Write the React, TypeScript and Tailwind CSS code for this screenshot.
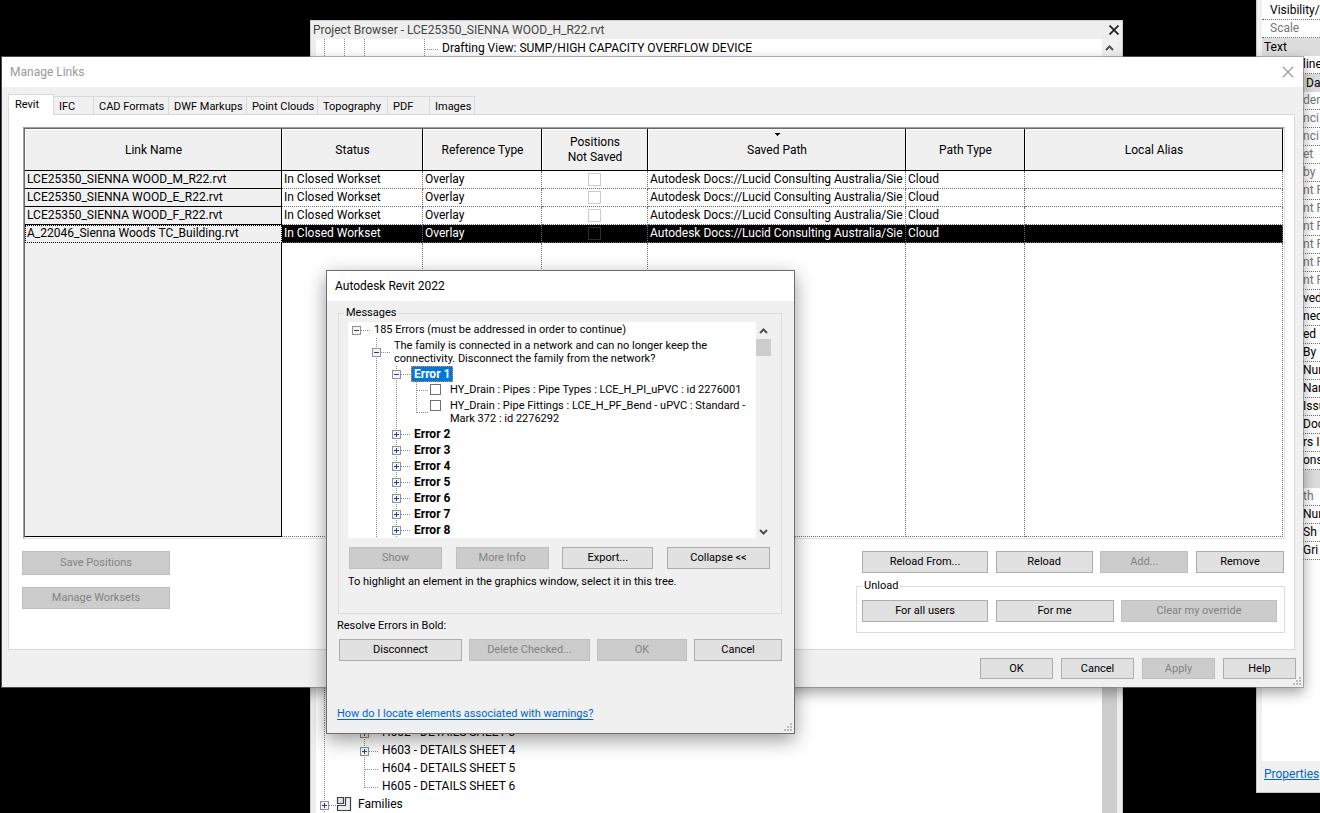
import type { ReactNode } from 'react';

type GuideKind = 'none' | 'line' | 'tee' | 'elbow' | 'plus' | 'minus' | 'root';

const DOT = '#8c8c8c';

function Guide({ kind, height, cy, last = false }: { kind: GuideKind; height: number; cy: number; last?: boolean }) {
  const width = last ? 26 : 20;
  const boxed = kind === 'plus' || kind === 'minus' || kind === 'root';
  const vertical = kind !== 'none' && kind !== 'root';
  const horizontal = boxed || kind === 'tee' || kind === 'elbow';
  const bottom = kind === 'elbow' ? cy + 1 : height;
  return (
    <svg width={width} height={height} className="block shrink-0" shapeRendering="crispEdges" aria-hidden="true">
      {vertical && <path d={`M8.5 0V${bottom}`} stroke={DOT} strokeDasharray="1 1" />}
      {horizontal && <path d={`M9 ${cy + 0.5}H23`} stroke={DOT} strokeDasharray="1 1" />}
      {boxed && (
        <>
          <rect x="4.5" y={cy - 3.5} width="8" height="8" fill="#f4f4f4" stroke="#919191" />
          <path d={`M6 ${cy + 0.5}H11`} stroke="#26439b" />
          {kind === 'plus' && <path d={`M8.5 ${cy - 2}V${cy + 3}`} stroke="#26439b" />}
        </>
      )}
    </svg>
  );
}

function TreeRow({
  guides,
  height,
  cy,
  children,
}: {
  guides: GuideKind[];
  height: number;
  cy: number;
  children: ReactNode;
}) {
  return (
    <li className="flex shrink-0 items-center whitespace-nowrap">
      {guides.map((g, i) => (
        <Guide key={i} kind={g} height={height} cy={cy} last={i === guides.length - 1} />
      ))}
      {children}
    </li>
  );
}

function Button({ children, className, disabled }: { children: ReactNode; className: string; disabled?: boolean }) {
  return (
    <button
      type="button"
      disabled={disabled}
      className={`shrink-0 border border-[#adadad] bg-[#e1e1e1] text-center text-[11px] leading-4 whitespace-nowrap text-black disabled:border-[#bfbfbf] disabled:bg-[#cccccc] disabled:text-[#838383] ${className}`}
    >
      {children}
    </button>
  );
}

function Chevron({ down }: { down?: boolean }) {
  return (
    <svg width="9" height="6" viewBox="0 0 9 6" aria-hidden="true">
      <path d={down ? 'M1 1l3.5 3.5L8 1' : 'M1 5l3.5-3.5L8 5'} fill="none" stroke="#505050" strokeWidth="2" />
    </svg>
  );
}

function Grip() {
  const dots = [
    [6, 0],
    [3, 3],
    [6, 3],
    [0, 6],
    [3, 6],
    [6, 6],
  ];
  return (
    <svg width="8" height="8" className="absolute right-[2px] bottom-[2px]" aria-hidden="true">
      {dots.map(([x, y]) => (
        <rect key={`${x}-${y}`} x={x} y={y} width="2" height="2" fill="#bcbcbc" />
      ))}
    </svg>
  );
}

function ProjectBrowser() {
  return (
    <section className="absolute top-[20px] bottom-0 left-[310px] flex w-[813px] flex-col border border-b-0 border-[#cccccc] bg-[#eeeeee] text-[12px]">
      <header className="flex h-[18px] shrink-0 items-center justify-between pr-[3px] pl-[2px] text-[#444444]">
        <h2>Project Browser - LCE25350_SIENNA WOOD_H_R22.rvt</h2>
        <button type="button" aria-label="Close project browser">
          <svg width="10" height="10" viewBox="0 0 10 10" aria-hidden="true">
            <path d="M.5.5l9 9M9.5.5l-9 9" stroke="#222222" strokeWidth="1.8" />
          </svg>
        </button>
      </header>
      <div className="flex min-h-0 flex-1 pr-[5px] pl-[5px]">
        <ul className="flex min-w-0 flex-1 flex-col overflow-hidden bg-white">
          <TreeRow guides={['line', 'line', 'line', 'none', 'none', 'tee']} height={18} cy={10}>
            Drafting View: SUMP/HIGH CAPACITY OVERFLOW DEVICE
          </TreeRow>
          <li className="flex-1 pl-[8px]" aria-hidden="true">
            <div className="h-full border-l border-dotted border-[#8c8c8c]" />
          </li>
          <TreeRow guides={['line', 'none', 'plus']} height={18} cy={10}>
            H602 - DETAILS SHEET 3
          </TreeRow>
          <TreeRow guides={['line', 'none', 'plus']} height={18} cy={10}>
            H603 - DETAILS SHEET 4
          </TreeRow>
          <TreeRow guides={['line', 'none', 'tee']} height={18} cy={10}>
            H604 - DETAILS SHEET 5
          </TreeRow>
          <TreeRow guides={['line', 'none', 'elbow']} height={18} cy={10}>
            H605 - DETAILS SHEET 6
          </TreeRow>
          <li className="flex shrink-0 items-center">
            <Guide kind="plus" height={18} cy={10} />
            <svg width="16" height="16" viewBox="0 0 16 16" className="mr-[6px]" aria-hidden="true">
              <path d="M1.5 1.5h6v6h-6z" fill="#dfe3e8" stroke="#3c4046" strokeWidth="1.2" />
              <path d="M9.5 1.5h5v13h-13v-5h8z" fill="#eceef1" stroke="#3c4046" strokeWidth="1.2" />
            </svg>
            Families
          </li>
        </ul>
        <div className="flex w-[15px] flex-col bg-[#f0f0f0]">
          <div className="flex h-[18px] shrink-0 items-center justify-center">
            <Chevron />
          </div>
          <div className="flex-1 bg-[#cdcdcd]" />
        </div>
      </div>
    </section>
  );
}

const properties: { text: string; muted?: boolean; group?: boolean }[] = [
  { text: 'line' },
  { text: 'Da', group: true },
  { text: 'der', muted: true },
  { text: 'nci', muted: true },
  { text: 'nci', muted: true },
  { text: 'et', muted: true },
  { text: 'by', muted: true },
  { text: 'nt R', muted: true },
  { text: 'nt R', muted: true },
  { text: 'nt R', muted: true },
  { text: 'nt R', muted: true },
  { text: 'nt R', muted: true },
  { text: 'nt R', muted: true },
  { text: 'ved' },
  { text: 'ned' },
  { text: 'ed' },
  { text: 'By' },
  { text: 'Nur' },
  { text: 'Nar' },
  { text: 'Issu' },
  { text: 'Doc' },
  { text: 'rs I' },
  { text: 'ons' },
  { text: '', group: true },
  { text: 'th', muted: true },
  { text: 'Nur' },
  { text: 'Sh' },
  { text: 'Gri' },
];

function PropertiesPalette() {
  return (
    <aside className="absolute top-0 right-0 flex h-[793px] w-[64px] flex-col overflow-hidden border-b border-l border-[#c8c8c8] bg-[#f0f0f0] pl-[5px] text-[12px] whitespace-nowrap">
      <div className="flex-1 bg-white pt-[2px]">
        <div className="h-[18px] border-b border-dotted border-[#6e6e6e] pl-2 leading-[16px]">Visibility/</div>
        <div className="h-[18px] border-b border-dotted border-[#6e6e6e] pl-2 leading-[16px] text-[#777777]">Scale</div>
        <div className="h-[18px] bg-[#dcdcdc] pl-[2px] leading-[18px]">Text</div>
        {properties.map((p, i) => (
          <div
            key={i}
            className={
              p.group
                ? 'h-[18px] bg-[#dcdcdc] pl-[44px] leading-[18px]'
                : p.muted
                  ? 'h-[18px] border-b border-dotted border-[#6e6e6e] pl-[41px] leading-[16px] text-[#777777]'
                  : 'h-[18px] border-b border-dotted border-[#6e6e6e] pl-[41px] leading-[16px]'
            }
          >
            {p.text}
          </div>
        ))}
      </div>
      <div className="h-[31px] pt-1 pl-[2px]">
        <a href="#properties" className="text-[#0066cc] underline">
          Properties
        </a>
      </div>
    </aside>
  );
}

const tabs = [
  { label: 'IFC', width: 'w-[40px]' },
  { label: 'CAD Formats', width: 'w-[75px]' },
  { label: 'DWF Markups', width: 'w-[78px]' },
  { label: 'Point Clouds', width: 'w-[71px]' },
  { label: 'Topography', width: 'w-[70px]' },
  { label: 'PDF', width: 'w-[42px]' },
  { label: 'Images', width: 'w-[45px]' },
];

const links = [
  'LCE25350_SIENNA WOOD_M_R22.rvt',
  'LCE25350_SIENNA WOOD_E_R22.rvt',
  'LCE25350_SIENNA WOOD_F_R22.rvt',
  'A_22046_Sienna Woods TC_Building.rvt',
];

const headers = ['Link Name', 'Status', 'Reference Type', 'Positions Not Saved', 'Saved Path', 'Path Type', 'Local Alias'];

function LinksTable() {
  const th = 'relative h-[42px] border-r border-b border-black bg-[#f0f0f0] p-0 pt-px pl-px text-center leading-[15px] font-normal shadow-[inset_1px_1px_0_#ffffff]';
  const cell = 'overflow-hidden border-r border-b border-dotted border-[#6e6e6e] p-0 pl-[2px] whitespace-nowrap';
  return (
    <div className="border-t border-r border-b border-l border-t-[#a0a0a0] border-r-[#e3e3e3] border-b-[#e3e3e3] border-l-[#a0a0a0]">
      <div className="border border-t-[#696969] border-r-white border-b-white border-l-[#696969]">
        <table className="h-[408px] w-full table-fixed border-separate border-spacing-0 text-[12px] leading-[17px]">
          <colgroup>
            <col className="w-[257px]" />
            <col className="w-[141px]" />
            <col className="w-[119px]" />
            <col className="w-[106px]" />
            <col className="w-[258px]" />
            <col className="w-[119px]" />
            <col />
          </colgroup>
          <thead>
            <tr>
              {headers.map((h) => (
                <th key={h} scope="col" className={th}>
                  {h === 'Saved Path' && (
                    <svg width="5" height="3" className="absolute top-[4px] left-1/2 -ml-[2px]" shapeRendering="crispEdges" aria-hidden="true">
                      <path d="M0 0h5v1H4v1H3v1H2V2H1V1H0z" fill="#000" />
                    </svg>
                  )}
                  {h === 'Positions Not Saved' ? (
                    <>
                      Positions
                      <br />
                      Not Saved
                    </>
                  ) : (
                    h
                  )}
                </th>
              ))}
            </tr>
          </thead>
          <tbody>
            {links.map((name, i) => {
              const selected = i === 3;
              return (
                <tr key={name} className={selected ? 'h-[18px] bg-black text-white' : 'h-[18px]'}>
                  <th
                    scope="row"
                    className={
                      selected
                        ? 'border-r border-b border-[#f0f0f0] bg-[#f0f0f0] p-0 pl-[2px] text-left font-normal whitespace-nowrap text-black outline-1 -outline-offset-1 outline-black outline-dotted'
                        : 'border-r border-b border-black bg-[#f0f0f0] p-0 pl-[2px] text-left font-normal whitespace-nowrap'
                    }
                  >
                    {name}
                  </th>
                  <td className={cell}>In Closed Workset</td>
                  <td className={cell}>Overlay</td>
                  <td className="border-r border-b border-dotted border-[#6e6e6e] p-0">
                    <input
                      type="checkbox"
                      aria-label={`Positions not saved: ${name}`}
                      className={
                        selected
                          ? 'mx-auto block size-[13px] appearance-none border border-[#2e2e2e] bg-black'
                          : 'mx-auto block size-[13px] appearance-none border border-[#cccccc] bg-white'
                      }
                    />
                  </td>
                  <td className={cell}>Autodesk Docs://Lucid Consulting Australia/Sie</td>
                  <td className={cell}>Cloud</td>
                  <td className={cell} />
                </tr>
              );
            })}
            <tr>
              <th className="border-r border-b border-black bg-[#f0f0f0] p-0" aria-label="Empty" />
              {headers.slice(1).map((h) => (
                <td key={h} className="border-r border-b border-dotted border-[#6e6e6e] p-0" />
              ))}
            </tr>
          </tbody>
        </table>
      </div>
    </div>
  );
}

function ManageLinks() {
  return (
    <section className="absolute top-[56px] right-[16px] left-[1px] border border-[rgba(128,128,128,0.6)] bg-[#f0f0f0] bg-clip-padding text-[11px] shadow-[0_5px_12px_rgba(0,0,0,0.35)]">
      <header className="flex h-[30px] items-center justify-between bg-white pr-[9px] pl-2">
        <h1 className="text-[12px] text-[#999999]">Manage Links</h1>
        <button type="button" aria-label="Close manage links">
          <svg width="12" height="12" viewBox="0 0 12 12" aria-hidden="true">
            <path d="M1 1l10 10M11 1L1 11" stroke="#999999" strokeWidth="1.1" />
          </svg>
        </button>
      </header>
      <div className="px-[6px] pt-[7px] pr-[8px]">
        <div role="tablist" className="flex items-end">
          <button
            type="button"
            role="tab"
            aria-selected="true"
            className="-mb-px h-[21px] w-[46px] border border-b-0 border-[#d9d9d9] bg-white pl-[6px] text-left"
          >
            Revit
          </button>
          {tabs.map((t) => (
            <button
              key={t.label}
              type="button"
              role="tab"
              aria-selected="false"
              className={`h-[18px] border-t border-r border-[#d9d9d9] pt-[2px] pl-[5px] text-left leading-[15px] whitespace-nowrap ${t.width}`}
            >
              {t.label}
            </button>
          ))}
        </div>
        <div className="border border-[#d9d9d9] bg-white pt-3 pr-[9px] pb-4 pl-[14px]">
          <LinksTable />
          <div className="mt-3 flex items-start justify-between">
            <div className="-ml-px flex flex-col gap-3">
              <Button disabled className="h-[24px] w-[148px]">
                Save Positions
              </Button>
              <Button disabled className="h-[22px] w-[148px]">
                Manage Worksets
              </Button>
            </div>
            <div className="w-[429px]">
              <div className="flex justify-between pr-px pl-[6px]">
                <Button className="h-[22px] w-[126px]">Reload From...</Button>
                <Button className="h-[22px] w-[97px]">Reload</Button>
                <Button disabled className="h-[22px] w-[88px]">
                  Add...
                </Button>
                <Button className="h-[22px] w-[88px]">Remove</Button>
              </div>
              <fieldset className="mt-[6px] border border-[#dcdcdc] pr-[7px] pb-[10px] pl-[5px]">
                <legend className="px-[2px] leading-[14px]">Unload</legend>
                <div className="flex justify-between pt-[7px]">
                  <Button className="h-[22px] w-[126px]">For all users</Button>
                  <Button className="h-[22px] w-[118px]">For me</Button>
                  <Button disabled className="h-[22px] w-[156px]">
                    Clear my override
                  </Button>
                </div>
              </fieldset>
            </div>
          </div>
        </div>
      </div>
      <footer className="flex justify-end gap-2 pt-2 pr-[7px] pb-2">
        <Button className="h-[21px] w-[73px]">OK</Button>
        <Button className="h-[21px] w-[73px]">Cancel</Button>
        <Button disabled className="h-[21px] w-[73px]">
          Apply
        </Button>
        <Button className="h-[21px] w-[73px]">Help</Button>
      </footer>
      <Grip />
    </section>
  );
}

const collapsedErrors = [2, 3, 4, 5, 6, 7, 8];

function ErrorItem({ guide, lines, height }: { guide: GuideKind; lines: string[]; height: number }) {
  return (
    <li>
      <label className="flex items-start whitespace-nowrap">
        <Guide kind="none" height={height} cy={8} />
        <Guide kind="line" height={height} cy={8} />
        <Guide kind="line" height={height} cy={8} />
        <Guide kind={guide} height={height} cy={guide === 'elbow' ? 14 : 8} />
        <input
          type="checkbox"
          className="mt-[2px] mr-[9px] ml-[2px] size-[11px] shrink-0 appearance-none border border-[#707070] bg-white"
        />
        <span className="py-px leading-[13px]">
          {lines.map((l) => (
            <span key={l} className="block">
              {l}
            </span>
          ))}
        </span>
      </label>
    </li>
  );
}

function ErrorDialog() {
  return (
    <section
      role="dialog"
      aria-label="Autodesk Revit 2022"
      className="absolute top-[270px] left-[326px] w-[469px] border border-[#6d6d6d] bg-[#f0f0f0] text-[11px] leading-[14px] shadow-[0_6px_18px_rgba(0,0,0,0.4)]"
    >
      <header className="flex h-[30px] items-center bg-white pl-2">
        <h2 className="text-[12px]">Autodesk Revit 2022</h2>
      </header>
      <div className="pt-[5px] pr-3 pb-3 pl-[11px]">
        <fieldset className="border border-[#dcdcdc] px-[9px]">
          <legend className="-ml-1 px-[2px]">Messages</legend>
          <div className="mt-[2px] flex h-[216px]">
            <ul className="w-[408px] overflow-hidden bg-white">
              <TreeRow guides={['root']} height={16} cy={8}>
                185 Errors (must be addressed in order to continue)
              </TreeRow>
              <TreeRow guides={['none', 'minus']} height={28} cy={14}>
                <span className="leading-[13px]">
                  The family is connected in a network and can no longer keep the
                  <br />
                  connectivity. Disconnect the family from the network?
                </span>
              </TreeRow>
              <TreeRow guides={['none', 'line', 'minus']} height={16} cy={8}>
                <span className="-ml-[3px] border border-dotted border-[#ff8728] bg-[#0078d7] px-[2px] text-[12px] font-bold text-white">
                  Error 1
                </span>
              </TreeRow>
              <ErrorItem guide="tee" height={16} lines={['HY_Drain : Pipes : Pipe Types : LCE_H_PI_uPVC : id 2276001']} />
              <ErrorItem
                guide="elbow"
                height={28}
                lines={['HY_Drain : Pipe Fittings : LCE_H_PF_Bend - uPVC : Standard -', 'Mark 372 : id 2276292']}
              />
              {collapsedErrors.map((n) => (
                <TreeRow key={n} guides={['none', 'line', 'plus']} height={16} cy={8}>
                  <span className="text-[12px] font-bold">Error {n}</span>
                </TreeRow>
              ))}
            </ul>
            <div className="flex w-[15px] flex-col items-center">
              <div className="flex h-[17px] items-center">
                <Chevron />
              </div>
              <div className="h-[17px] w-full bg-[#cdcdcd]" />
              <div className="flex-1" />
              <div className="flex h-[13px] items-center">
                <Chevron down />
              </div>
            </div>
          </div>
          <div className="mt-[9px] flex justify-between pr-[2px] pl-px">
            <Button disabled className="h-[22px] w-[93px]">
              Show
            </Button>
            <Button disabled className="h-[22px] w-[93px]">
              More Info
            </Button>
            <Button className="h-[22px] w-[91px]">Export...</Button>
            <Button className="h-[22px] w-[103px]">Collapse &lt;&lt;</Button>
          </div>
          <p className="mt-[6px] pb-6">To highlight an element in the graphics window, select it in this tree.</p>
        </fieldset>
        <p className="mt-[5px] -ml-px">Resolve Errors in Bold:</p>
        <div className="mt-[6px] flex justify-between pl-px">
          <Button className="h-[22px] w-[123px]">Disconnect</Button>
          <Button disabled className="h-[22px] w-[121px]">
            Delete Checked...
          </Button>
          <Button disabled className="h-[22px] w-[90px]">
            OK
          </Button>
          <Button className="h-[22px] w-[88px]">Cancel</Button>
        </div>
        <a href="#warnings" className="mt-[46px] -ml-px inline-block text-[#0066cc] underline underline-offset-2">
          How do I locate elements associated with warnings?
        </a>
      </div>
      <Grip />
    </section>
  );
}

export default function App() {
  return (
    <main className="relative min-h-screen overflow-hidden bg-black font-['Roboto','Noto_Sans',sans-serif] text-black">
      <ProjectBrowser />
      <PropertiesPalette />
      <ManageLinks />
      <ErrorDialog />
    </main>
  );
}
